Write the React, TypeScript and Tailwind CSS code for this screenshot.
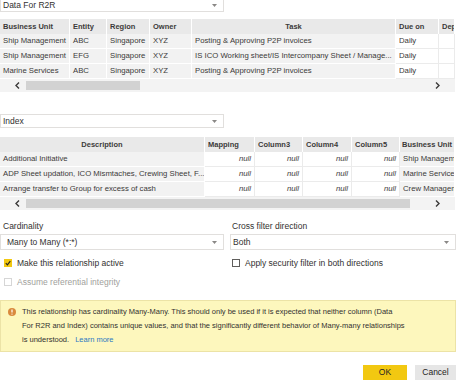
import React from "react";

type Col = {
  label: string;
  width: string;
  head: string;
  cell: string;
  tone: "gray" | "white";
};

const taskCols: Col[] = [
  { label: "Business Unit", width: "w-[70px]", head: "justify-start", cell: "justify-start", tone: "gray" },
  { label: "Entity", width: "w-[37px]", head: "justify-start", cell: "justify-start", tone: "gray" },
  { label: "Region", width: "w-[43px]", head: "justify-start", cell: "justify-start", tone: "gray" },
  { label: "Owner", width: "w-[42px]", head: "justify-start", cell: "justify-start", tone: "gray" },
  { label: "Task", width: "w-[204px]", head: "justify-center", cell: "justify-start", tone: "gray" },
  { label: "Due on", width: "w-[43px]", head: "justify-start", cell: "justify-start", tone: "white" },
  { label: "Dep", width: "w-[16px]", head: "justify-start", cell: "justify-start", tone: "white" },
];

const taskRows = [
  ["Ship Management", "ABC", "Singapore", "XYZ", "Posting & Approving P2P invoices", "Daily", ""],
  ["Ship Management", "EFG", "Singapore", "XYZ", "IS ICO Working sheet/IS Intercompany Sheet / Manage...", "Daily", ""],
  ["Marine Services", "ABC", "Singapore", "XYZ", "Posting & Approving P2P invoices", "Daily", ""],
];

const indexCols: Col[] = [
  { label: "Description", width: "w-[205px]", head: "justify-center", cell: "justify-start", tone: "gray" },
  { label: "Mapping", width: "w-[50px]", head: "justify-start", cell: "justify-end italic", tone: "white" },
  { label: "Column3", width: "w-[48px]", head: "justify-start", cell: "justify-end italic", tone: "white" },
  { label: "Column4", width: "w-[49px]", head: "justify-start", cell: "justify-end italic", tone: "white" },
  { label: "Column5", width: "w-[48px]", head: "justify-start", cell: "justify-end italic", tone: "white" },
  { label: "Business Unit", width: "w-[55px]", head: "justify-center", cell: "justify-start", tone: "gray" },
];

const indexRows = [
  ["Additional Initiative", "null", "null", "null", "null", "Ship Management"],
  ["ADP Sheet updation, ICO Mismtaches, Crewing Sheet, F...", "null", "null", "null", "null", "Marine Services"],
  ["Arrange transfer to Group for excess of cash", "null", "null", "null", "null", "Crew Management"],
];

function Caret() {
  return (
    <svg width="5" height="3" viewBox="0 0 5 3" className="shrink-0">
      <path d="M0 0h5L2.5 3z" fill="#8a8886" />
    </svg>
  );
}

function Dropdown({ value, className }: { value: string; className: string }) {
  return (
    <div
      className={`flex items-center justify-between border border-[#e1dfdd] bg-white pl-[2px] pr-[6px] text-[8.5px] text-[#323130] ${className}`}
    >
      <span>{value}</span>
      <Caret />
    </div>
  );
}

function Chevron({ dir }: { dir: "left" | "right" }) {
  return (
    <svg width="5" height="7" viewBox="0 0 5 7" className="shrink-0">
      <path
        d={dir === "left" ? "M4 0.5L1 3.5L4 6.5" : "M1 0.5L4 3.5L1 6.5"}
        fill="none"
        stroke="#3b3a39"
        strokeWidth="1.4"
      />
    </svg>
  );
}

function Preview({
  cols,
  rows,
  thumb,
}: {
  cols: Col[];
  rows: string[][];
  thumb: string;
}) {
  return (
    <div className="w-[455px] text-[7.75px]">
      <div className="flex h-[15px] bg-[#e9e9e9]">
        {cols.map((c) => (
          <div
            key={c.label}
            className={`${c.width} ${c.head} flex shrink-0 items-center overflow-hidden whitespace-nowrap border-r border-white px-[3px] text-[7.5px] font-bold text-[#3b3a39]`}
          >
            {c.label}
          </div>
        ))}
      </div>
      {rows.map((row, i) => (
        <div key={i} className="flex h-[15px]">
          {cols.map((c, j) => (
            <div
              key={c.label}
              className={`${c.width} ${c.cell} flex shrink-0 items-center overflow-hidden whitespace-nowrap border-r border-b px-[3px] text-[#3b3a39] ${
                c.tone === "gray" ? "border-white bg-[#f2f2f2]" : "border-[#ebebeb] bg-white"
              }`}
            >
              {row[j]}
            </div>
          ))}
        </div>
      ))}
      <div className="flex h-[13px] items-center bg-[#f3f3f3] pl-[15px] pr-[15px]">
        <Chevron dir="left" />
        <div className="ml-[6px] flex-1">
          <div className={`h-[9px] bg-[#d2d2d2] ${thumb}`} />
        </div>
        <Chevron dir="right" />
      </div>
    </div>
  );
}

function Check({ checked, disabled }: { checked?: boolean; disabled?: boolean }) {
  if (checked) {
    return (
      <span className="flex h-[8px] w-[8px] items-center justify-center bg-[#f2c811]">
        <svg width="6" height="6" viewBox="0 0 6 6">
          <path d="M0.8 3.2L2.4 4.8L5.3 1.2" fill="none" stroke="#252423" strokeWidth="1.2" />
        </svg>
      </span>
    );
  }
  return (
    <span
      className={`h-[8px] w-[8px] border bg-white ${disabled ? "border-[#d6d6d6]" : "border-[#605e5c]"}`}
    />
  );
}

export default function App() {
  return (
    <div className="h-[388px] w-[474px] overflow-hidden bg-white font-['Liberation_Sans',Arial,sans-serif] text-[#323130]">
      <div className="w-[456px]">
        <Dropdown value="Data For R2R" className="-mt-[2px] h-[14px] w-[224px]" />

        <div className="mt-[7px]">
          <Preview cols={taskCols} rows={taskRows} thumb="w-[114px]" />
        </div>

        <Dropdown value="Index" className="mt-[22px] h-[14px] w-[224px]" />

        <div className="mt-[9px]">
          <Preview cols={indexCols} rows={indexRows} thumb="w-[384px]" />
        </div>

        <div className="mt-[11px] grid grid-cols-[224px_226px] gap-x-[6px] text-[8.5px]">
          <div>
            <div className="pl-[3px] leading-[10px]">Cardinality</div>
            <Dropdown value="Many to Many (*:*)" className="mt-[3px] h-[16px] pl-[6px]" />
            <label className="mt-[7px] flex items-center gap-[5px] pl-[4px]">
              <Check checked />
              <span>Make this relationship active</span>
            </label>
            <label className="mt-[6px] flex items-center gap-[5px] pl-[4px] text-[#a19f9d]">
              <Check disabled />
              <span>Assume referential integrity</span>
            </label>
          </div>
          <div>
            <div className="pl-[2px] leading-[10px]">Cross filter direction</div>
            <Dropdown value="Both" className="mt-[3px] h-[16px]" />
            <label className="mt-[7px] flex items-center gap-[5px] pl-[2px]">
              <Check />
              <span>Apply security filter in both directions</span>
            </label>
          </div>
        </div>

        <div className="mt-[11px] flex gap-[6px] border border-[#ece3a6] bg-[#fdf7bd] py-[4px] pl-[7px] pr-[8px] text-[7.5px] leading-[14px] text-[#323130]">
          <svg width="8" height="8" viewBox="0 0 8 8" className="mt-[3px] shrink-0">
            <circle cx="4" cy="4" r="4" fill="#d98a3d" />
            <path d="M4 1.6v3" stroke="#fff" strokeWidth="1.2" />
            <circle cx="4" cy="6.1" r="0.65" fill="#fff" />
          </svg>
          <p className="whitespace-nowrap">
            This relationship has cardinality Many-Many. This should only be used if it is expected
            that neither column (Data
            <br />
            For R2R and Index) contains unique values, and that the significantly different
            behavior of Many-many relationships
            <br />
            is understood.
            <span className="ml-[6px] text-[#2b79c2]">Learn more</span>
          </p>
        </div>

        <div className="mt-[13px] flex justify-end gap-[8px] text-[8.5px]">
          <button className="h-[15px] w-[44px] bg-[#f2c811] text-[#252423]">OK</button>
          <button className="h-[15px] w-[41px] bg-[#e6e6e6] text-[#252423]">Cancel</button>
        </div>
      </div>
    </div>
  );
}
